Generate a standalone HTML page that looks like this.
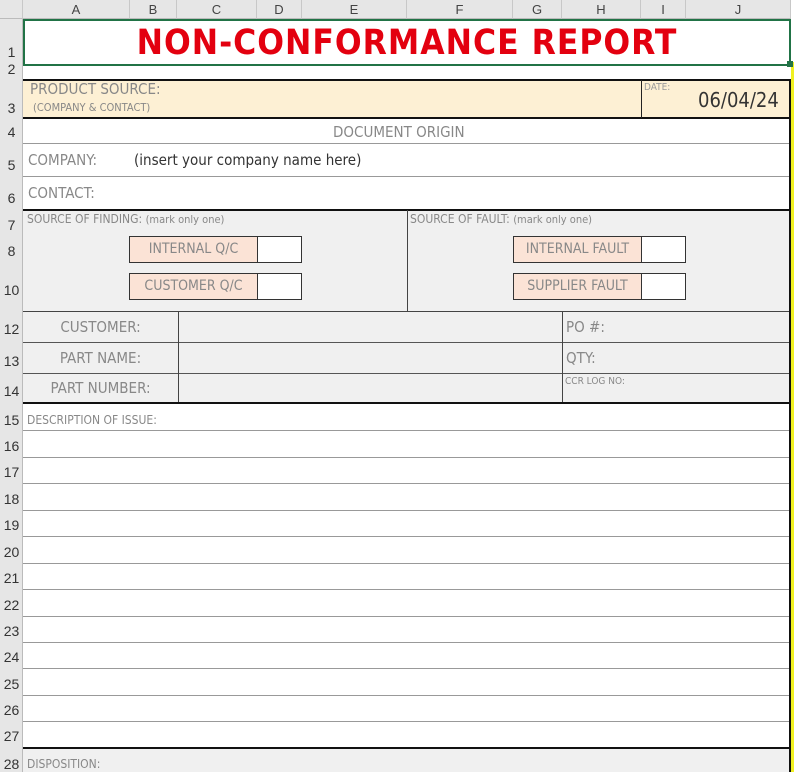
<!DOCTYPE html><html><head><style>
html,body{margin:0;width:794px;height:772px;overflow:hidden}
body{background:#fff;font-family:"DejaVu Sans Condensed","Liberation Sans",sans-serif;position:relative}
div{position:absolute;box-sizing:border-box}
.ch{top:0;height:19px;background:#e6e6e6;border-right:1px solid #c8c8c8;border-bottom:1px solid #bbb;font-size:13px;color:#444;text-align:center;line-height:19px;font-family:"Liberation Sans",sans-serif}
.rh{left:0;width:23px;font-size:14px;color:#333;text-align:center;font-family:"Liberation Sans",sans-serif}
.t{color:#888;white-space:nowrap}
.hl{left:23px;width:767px;height:1px;background:#999}
.hb{left:23px;width:767px;height:2px;background:#111}
</style></head><body>
<div class="ch" style="left:0;width:23px"></div>
<div class="ch" style="left:23px;width:107px">A</div>
<div class="ch" style="left:130px;width:47px">B</div>
<div class="ch" style="left:177px;width:80px">C</div>
<div class="ch" style="left:257px;width:45px">D</div>
<div class="ch" style="left:302px;width:105px">E</div>
<div class="ch" style="left:407px;width:106px">F</div>
<div class="ch" style="left:513px;width:49px">G</div>
<div class="ch" style="left:562px;width:79px">H</div>
<div class="ch" style="left:641px;width:45px">I</div>
<div class="ch" style="left:686px;width:105px">J</div>
<div class="ch" style="left:791px;width:3px;background:#fff;border:0"></div>
<div style="left:791px;top:62px;width:3px;height:710px;background:#f0f020"></div>
<div style="left:0;top:19px;width:23px;height:753px;background:#e6e6e6;border-right:1px solid #bbb"></div>
<div class="rh" style="top:44px">1</div>
<div class="rh" style="top:61px">2</div>
<div class="rh" style="top:100px">3</div>
<div class="rh" style="top:124px">4</div>
<div class="rh" style="top:157px">5</div>
<div class="rh" style="top:190px">6</div>
<div class="rh" style="top:217px">7</div>
<div class="rh" style="top:243px">8</div>
<div class="rh" style="top:282px">10</div>
<div class="rh" style="top:321px">12</div>
<div class="rh" style="top:353px">13</div>
<div class="rh" style="top:383px">14</div>
<div class="rh" style="top:412px">15</div>
<div class="rh" style="top:438px">16</div><div class="rh" style="top:464px">17</div><div class="rh" style="top:491px">18</div><div class="rh" style="top:517px">19</div><div class="rh" style="top:544px">20</div><div class="rh" style="top:570px">21</div><div class="rh" style="top:597px">22</div><div class="rh" style="top:623px">23</div><div class="rh" style="top:649px">24</div><div class="rh" style="top:676px">25</div><div class="rh" style="top:702px">26</div><div class="rh" style="top:728px">27</div><div class="rh" style="top:756px">28</div>

<div style="left:23px;top:19px;width:768px;height:47px;border:2px solid #217346;text-align:center;font:bold 35px/44px 'DejaVu Sans Condensed','Liberation Sans',sans-serif;color:#e3000f;letter-spacing:1px">NON-CONFORMANCE REPORT</div>
<div style="left:787px;top:61px;width:6px;height:6px;background:#217346"></div>

<div style="left:23px;top:79px;width:767px;height:40px;background:#fdf0d4;border-top:2px solid #111;border-bottom:2px solid #111"></div>
<div style="left:641px;top:80px;width:1px;height:38px;background:#222"></div>
<div class="t" style="left:30px;top:80px;font-size:15px">PRODUCT SOURCE:</div>
<div class="t" style="left:33px;top:101px;font-size:11px">(COMPANY &amp; CONTACT)</div>
<div class="t" style="left:644px;top:82px;font-size:10px;color:#999">DATE:</div>
<div style="left:698px;top:88px;font-size:20px;color:#333">06/04/24</div>
<div class="t" style="left:333px;top:123px;font-size:15px">DOCUMENT ORIGIN</div>
<div class="hl" style="top:143px"></div>
<div class="t" style="left:28px;top:151px;font-size:15px">COMPANY:</div>
<div style="left:134px;top:151px;font-size:15px;color:#333;white-space:nowrap">(insert your company name here)</div>
<div class="hl" style="top:176px"></div>
<div class="t" style="left:28px;top:184px;font-size:15px">CONTACT:</div>

<div style="left:23px;top:209px;width:767px;height:102px;background:#f0f0f0;border-top:2px solid #111"></div>
<div style="left:407px;top:210px;width:1px;height:101px;background:#444"></div>
<div class="t" style="left:27px;top:212px;font-size:12px">SOURCE OF FINDING: <span style="font-size:11px">(mark only one)</span></div>
<div class="t" style="left:410px;top:212px;font-size:12px">SOURCE OF FAULT: <span style="font-size:11px">(mark only one)</span></div>
<div class="t" style="left:129px;top:236px;width:129px;height:27px;background:#fbe3d6;border:1px solid #333;text-align:center;line-height:25px;font-size:14px">INTERNAL Q/C</div>
<div style="left:257px;top:236px;width:45px;height:27px;background:#fff;border:1px solid #333"></div>
<div class="t" style="left:129px;top:273px;width:129px;height:27px;background:#fbe3d6;border:1px solid #333;text-align:center;line-height:25px;font-size:14px">CUSTOMER Q/C</div>
<div style="left:257px;top:273px;width:45px;height:27px;background:#fff;border:1px solid #333"></div>
<div class="t" style="left:513px;top:236px;width:129px;height:27px;background:#fbe3d6;border:1px solid #333;text-align:center;line-height:25px;font-size:14px">INTERNAL FAULT</div>
<div style="left:641px;top:236px;width:45px;height:27px;background:#fff;border:1px solid #333"></div>
<div class="t" style="left:513px;top:273px;width:129px;height:27px;background:#fbe3d6;border:1px solid #333;text-align:center;line-height:25px;font-size:14px">SUPPLIER FAULT</div>
<div style="left:641px;top:273px;width:45px;height:27px;background:#fff;border:1px solid #333"></div>

<div style="left:23px;top:311px;width:767px;height:93px;background:#f0f0f0;border-top:1px solid #444"></div>
<div class="hl" style="top:342px;background:#555"></div>
<div class="hl" style="top:373px;background:#555"></div>
<div style="left:178px;top:311px;width:1px;height:92px;background:#444"></div>
<div style="left:562px;top:311px;width:1px;height:92px;background:#444"></div>
<div class="t" style="left:23px;width:155px;top:318px;font-size:15px;text-align:center">CUSTOMER:</div>
<div class="t" style="left:23px;width:155px;top:349px;font-size:15px;text-align:center">PART NAME:</div>
<div class="t" style="left:23px;width:155px;top:379px;font-size:15px;text-align:center">PART NUMBER:</div>
<div class="t" style="left:566px;top:318px;font-size:15px">PO #:</div>
<div class="t" style="left:566px;top:349px;font-size:15px">QTY:</div>
<div class="t" style="left:565px;top:376px;font-size:10px">CCR LOG NO:</div>
<div class="hb" style="top:402px"></div>
<div class="t" style="left:27px;top:413px;font-size:12px">DESCRIPTION OF ISSUE:</div>
<div class="hl" style="top:430px"></div><div class="hl" style="top:457px"></div><div class="hl" style="top:483px"></div><div class="hl" style="top:510px"></div><div class="hl" style="top:536px"></div><div class="hl" style="top:563px"></div><div class="hl" style="top:589px"></div><div class="hl" style="top:616px"></div><div class="hl" style="top:642px"></div><div class="hl" style="top:668px"></div><div class="hl" style="top:695px"></div><div class="hl" style="top:721px"></div>
<div style="left:23px;top:747px;width:767px;height:25px;background:#f0f0f0;border-top:2px solid #111"></div>
<div class="t" style="left:27px;top:757px;font-size:12px">DISPOSITION:</div>
<div style="left:789px;top:79px;width:2px;height:693px;background:#111"></div>
</body></html>
